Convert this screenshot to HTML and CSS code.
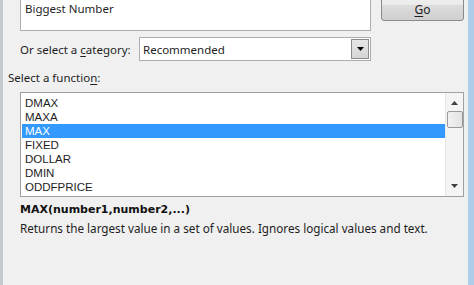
FILE: index.html
```html
<!DOCTYPE html>
<html lang="en">
<head>
    <meta charset="UTF-8">
    <meta name="viewport" content="width=device-width, initial-scale=1.0">
    <title>Insert Function</title>
    <link rel="stylesheet" href="styles.css">
</head>
<body>
    <div class="dialog">
        <div class="search-row">
            <div class="search-box">Biggest Number</div>
            <button type="button" class="btn-go"><u>G</u>o</button>
        </div>
        <div class="category-row">
            <span class="label">Or select a <u>c</u>ategory:</span>
            <div class="select">
                <span class="select-text">Recommended</span>
                <span class="select-arrow">
                    <svg width="7" height="4" viewBox="0 0 7 4"><path d="M0 0h7L3.5 4z" fill="#000"/></svg>
                </span>
            </div>
        </div>
        <div class="list-label">Select a functio<u>n</u>:</div>
        <div class="listbox">
            <ul class="items" id="functionList">
                <!-- filled by script -->
            </ul>
            <div class="scrollbar">
                <svg class="arrow" width="7" height="4" viewBox="0 0 7 4"><path d="M3.5 0L7 4H0z" fill="#404040"/></svg>
                <div class="thumb"></div>
                <div class="track"></div>
                <svg class="arrow" width="7" height="4" viewBox="0 0 7 4"><path d="M0 0h7L3.5 4z" fill="#404040"/></svg>
            </div>
        </div>
        <div class="syntax">MAX(number1,number2,...)</div>
        <div class="description">Returns the largest value in a set of values. Ignores logical values and text.</div>
    </div>
    <script>
        // Functions shown for the search
        const functions = ["DMAX", "MAXA", "MAX", "FIXED", "DOLLAR", "DMIN", "ODDFPRICE"];
        const selected = "MAX";

        const list = document.getElementById("functionList");
        functions.forEach(name => {
            const item = document.createElement("li");
            item.textContent = name;
            if (name === selected) {
                item.className = "selected";
            }
            list.appendChild(item);
        });
    </script>
</body>
</html>
```

FILE: styles.css
```css
body {
    margin: 0;
    width: 474px;
    height: 285px;
    overflow: hidden;
    background: #f0f0f0;
    font-family: "Noto Sans", "Segoe UI", sans-serif;
    font-size: 11.5px;
    color: #1e1e1e;
}
.dialog {
    box-sizing: border-box;
    height: 285px;
    border-left: 3px solid #c3c9cf;
    border-right: 6px solid #aecde9;
    padding-left: 5px;
    display: flex;
    flex-direction: column;
}
u {
    text-decoration-thickness: 1px;
    text-underline-offset: 2px;
}
.search-row {
    display: flex;
    align-items: flex-start;
    margin-left: 12px;
    margin-top: -12px;
}
.search-box {
    box-sizing: border-box;
    width: 351px;
    height: 43px;
    background: #fff;
    border: 1px solid #abadb3;
    padding: 12px 4px 0;
    line-height: 16px;
}
.btn-go {
    box-sizing: border-box;
    width: 83px;
    height: 33px;
    margin-left: 10px;
    border: 1px solid #8a8a8a;
    border-radius: 3px;
    background: linear-gradient(#f4f4f4 0%, #ebebeb 50%, #dddddd 51%, #cfcfcf 100%);
    font-family: inherit;
    font-size: 12px;
    color: #1e1e1e;
    padding: 10px 0 0;
    line-height: 16px;
}
.category-row {
    display: flex;
    align-items: center;
    margin-left: 12px;
    margin-top: 6px;
}
.label {
    width: 119px;
}
.select {
    box-sizing: border-box;
    width: 232px;
    height: 24px;
    background: #fff;
    border: 1px solid #abadb3;
    display: flex;
    align-items: center;
    padding: 1px 1px 1px 3px;
}
.select-text {
    flex: 1;
}
.select-arrow {
    box-sizing: border-box;
    width: 18px;
    height: 20px;
    background: linear-gradient(#e6e6e6, #d6d6d6);
    border: 1px solid #8c8c8c;
    display: flex;
    align-items: center;
    justify-content: center;
}
.list-label {
    margin-top: 9px;
    line-height: 16px;
}
.listbox {
    box-sizing: border-box;
    width: 444px;
    height: 105px;
    margin-left: 12px;
    margin-top: 6px;
    background: #fff;
    border: 1px solid #a0a0a0;
    display: flex;
}
.items {
    list-style: none;
    margin: 0;
    padding: 3px 0 0 1px;
    flex: 1;
    font-family: "Liberation Sans", Arial, sans-serif;
    font-size: 11.5px;
}
.items li {
    height: 14px;
    line-height: 14px;
    padding-left: 3px;
}
.items li.selected {
    background: #3399ff;
    color: #fff;
}
.scrollbar {
    width: 18px;
    background: #f4f4f4;
    border-left: 1px solid #e8e8e8;
    display: flex;
    flex-direction: column;
    align-items: center;
    padding: 8px 0 8px;
    box-sizing: border-box;
}
.scrollbar .arrow {
    flex: none;
}
.thumb {
    box-sizing: border-box;
    width: 16px;
    height: 17px;
    margin-top: 6px;
    border: 1px solid #9a9a9a;
    border-radius: 2px;
    background: linear-gradient(90deg, #f2f2f2, #e2e2e2);
}
.track {
    flex: 1;
}
.syntax {
    margin-left: 12px;
    margin-top: 5px;
    font-family: "DejaVu Sans", Verdana, sans-serif;
    font-weight: bold;
    font-size: 11px;
    line-height: 16px;
    color: #111;
}
.description {
    margin-left: 12px;
    margin-top: 2px;
    font-size: 11.7px;
    line-height: 16px;
}
```
